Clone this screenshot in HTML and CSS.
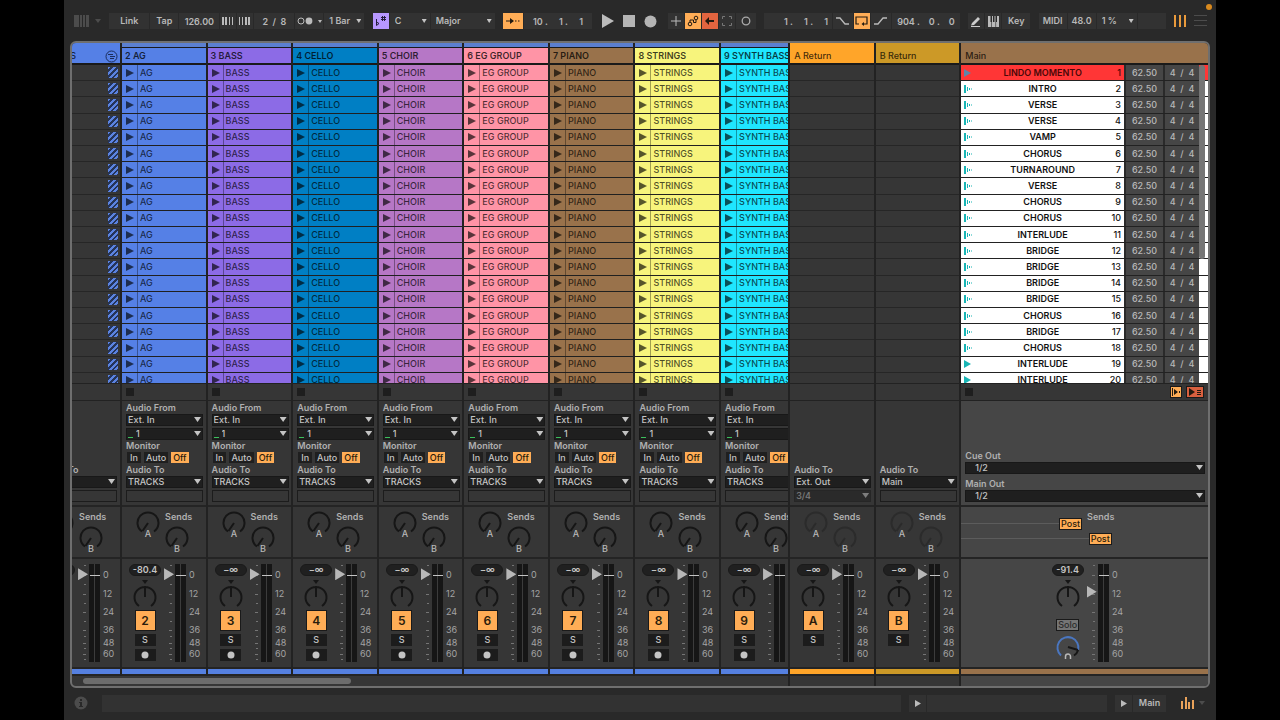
FILE: index.html
```html
<!DOCTYPE html>
<html lang="en">
<head>
    <meta charset="UTF-8">
    <meta name="viewport" content="width=device-width, initial-scale=1.0">
    <title>Session View</title>
    <link rel="stylesheet" href="styles.css">
</head>
<body>
    <div class="app">

        <!-- Control bar -->
        <header class="toolbar">
            <div class="group bare logo">
                <svg width="16" height="12" viewBox="0 0 16 12" fill="#4c4c4c"><path d="M0 0h5v12H0zM6 0h2v12H6zM9 0h2v12H9zM12 0h3v12h-3z"/></svg>
                <i class="tri dim"></i>
            </div>

            <div class="group">
                <button class="w40">Link</button>
                <button class="w28">Tap</button>
                <input class="w40" type="text" aria-label="Tempo" value="126.00">
                <button class="w16" aria-label="Nudge down"><svg width="12" height="10" viewBox="0 0 12 10" fill="#bbb"><path d="M0 1h2v8H0zM3 1h2v8H3zM7 1h1v8H7zM10 1h1v8h-1z"/></svg></button>
                <button class="w16" aria-label="Nudge up"><svg width="12" height="10" viewBox="0 0 12 10" fill="#bbb"><path d="M0 1h1v8H0zM3 1h1v8H3zM6 1h2v8H6zM9 1h2v8H9z"/></svg></button>
                <input class="w40" type="text" aria-label="Signature" value="2  /  8">
                <button class="w28" aria-label="Metronome"><svg width="25" height="10" viewBox="0 0 25 10"><circle cx="4" cy="5" r="3" fill="none" stroke="#bbb"/><circle cx="12" cy="5" r="3.4" fill="#bbb"/><path d="M21 4h4l-2 3z" fill="#bbb"/></svg></button>
                <span class="drop w40"><select aria-label="Quantization"><option>1 Bar</option></select></span>
            </div>

            <div class="group">
                <button class="w16 violet" aria-label="Scale"><svg width="12" height="12" viewBox="0 0 12 12" fill="none" stroke="#241c3c"><path d="M1.500 4v6.500l2.500-2-2.500-1.500M7.500 1v5M9.500 1v5M6 2.500h5M6 4.500h5"/></svg></button>
                <span class="drop w40"><select aria-label="Root note"><option>C</option></select></span>
                <span class="drop w64"><select aria-label="Scale name"><option>Major</option></select></span>
            </div>

            <div class="group">
                <button class="w20 amber" aria-label="Follow"><svg width="16" height="10" viewBox="0 0 16 10"><path d="M1 4.500h4V2l4 3-4 3V5.500H1zM10 4.500h1.500v1H10zM13 4.500h1.500v1H13z" fill="#221a10"/></svg></button>
                <input class="w68" type="text" aria-label="Position" value="10 .     1 .     1">
            </div>

            <div class="group bare transport">
                <button aria-label="Play"><svg width="12" height="14"><path d="M0 0l12 7-12 7z" fill="#bbb"/></svg></button>
                <button aria-label="Stop"><svg width="12" height="12"><path d="M0 0h12v12H0z" fill="#b4b4b4"/></svg></button>
                <button aria-label="Record"><svg width="13" height="13"><circle cx="6.500" cy="6.500" r="6" fill="#b4b4b4"/></svg></button>
            </div>

            <div class="group">
                <button class="w16" aria-label="Overdub"><svg width="10" height="10"><path d="M5 0v10M0 5h10" stroke="#bbb"/></svg></button>
                <button class="w16 amber" aria-label="Automation"><svg width="12" height="12" fill="none" stroke="#221a10"><circle cx="3" cy="9" r="1.800"/><circle cx="9" cy="3" r="1.800"/><path d="M3 7V5h3.500v2.500H9V5"/></svg></button>
                <button class="w16 red" aria-label="Re-enable automation"><svg width="10" height="8"><path d="M0 4l4-4v3h5v2H4v3z" fill="#221a10"/></svg></button>
                <button class="w16" aria-label="Capture"><svg width="10" height="10" fill="none" stroke="#777"><path d="M.5 3V.5H3M7 .5h2.500V3M9.500 7v2.500H7M3 9.500H.5V7"/></svg></button>
                <button class="w20" aria-label="Session record"><svg width="10" height="10"><circle cx="5" cy="5" r="3.800" fill="none" stroke="#aaa" stroke-width="1.300"/></svg></button>
            </div>

            <div class="group">
                <input class="w68 end" type="text" aria-label="Loop start" value="1 .     1 .     1">
                <button class="w20" aria-label="Punch in"><svg width="13" height="8" fill="none" stroke="#bbb" stroke-width="1.300"><path d="M0 1h4l5 6h4"/></svg></button>
                <button class="w16 amber" aria-label="Loop"><svg width="13" height="11" viewBox="0 0 13 11" fill="none" stroke="#221a10" stroke-width="1.200"><path d="M4 8H1V1h11v7h-3"/><path d="M9 6v4L6.500 8z" fill="#221a10" stroke="none"/></svg></button>
                <button class="w20" aria-label="Punch out"><svg width="13" height="8" fill="none" stroke="#bbb" stroke-width="1.300"><path d="M0 7h4l5-6h4"/></svg></button>
                <input class="w68" type="text" aria-label="Loop length" value="904 .    0 .    0">
            </div>

            <div class="group">
                <button class="w16" aria-label="Draw mode"><svg width="12" height="11" viewBox="0 0 12 11"><path d="M2 7l6-6 2 2-6 6-3 .500zM1 10h9v1H1z" fill="#ccc"/></svg></button>
                <button class="w16" aria-label="Computer keyboard"><svg width="11" height="11" viewBox="0 0 11 11"><path d="M0 0h11v11H0z" fill="#bbb"/><path d="M2.500 0h1.500v6H2.500zM5 0h1.500v6H5zM7.500 0H9v6H7.500zM3 6h.6v5H3zM7.500 6h.6v5h-.6z" fill="#2b2b2b"/></svg></button>
                <button class="w28">Key</button>
            </div>

            <div class="group">
                <button class="w28">MIDI</button>
                <button class="w28">48.0</button>
                <span class="drop w40"><select aria-label="CPU load"><option>1 %</option></select></span>
                <span class="blank"></span>
            </div>

            <div class="group bare views">
                <button aria-label="Session view"><svg width="14" height="12" fill="#e99a3c"><path d="M0 0h2v12H0zM5 0h2v12H5zM10 0h2v12h-2z"/></svg></button>
                <button aria-label="Arrangement view"><svg width="13" height="12" fill="#4c4c4c"><path d="M0 0h13v1H0zM0 5h13v1H0zM0 10h13v1H0z"/></svg></button>
            </div>
            <span class="dot"></span>
        </header>

        <!-- Session grid, columns are filled by script.js -->
        <main class="session"></main>

        <!-- Status bar -->
        <footer class="status">
            <svg class="info" width="14" height="14"><circle cx="7" cy="7" r="6.500" fill="#4c4c4c"/><path d="M6 3h2v2H6zM5 6h3v4h1v1H5v-1h1V7H5z" fill="#292929"/></svg>
            <div class="message"></div>
            <div class="preview">
                <button aria-label="Preview"><svg width="6" height="7"><path d="M0 0l6 3.500L0 7z" fill="#bbb"/></svg></button>
                <span></span>
            </div>
            <div class="output">
                <button aria-label="Play main"><svg width="6" height="7"><path d="M0 0l6 3.500L0 7z" fill="#bbb"/></svg></button>
                <button class="name">Main</button>
            </div>
            <svg class="levels" width="14" height="12" fill="#e9a25a"><path d="M0 4h2v8H0zM4 0h2v12H4zM7 5h2v7H7zM11 3h2v9h-2z"/></svg>
            <i class="tri dim"></i>
        </footer>
    </div>

    <script src="script.js"></script>
</body>
</html>
```

FILE: styles.css
```css
*{
    margin: 0;
    padding: 0;
    box-sizing: border-box;
}

body{
    background: #000;
    color: #b8b8b8;
    font-family: Inter, "Liberation Sans", sans-serif;
    font-size: 9px;
    font-weight: 500;
    line-height: 12px;
}

button, input, select{
    font: inherit;
    color: inherit;
    background: none;
    border: 0;
    border-radius: 0;
    appearance: none;
}

svg{
    display: block;
    flex: none;
}

.app{
    margin: 0 5%;
    background: #292929;
    min-height: 100vh;
}

/* control bar */
.toolbar{
    height: 41px;
    padding: 1px 9px 0 10px;
    display: flex;
    align-items: center;
    justify-content: space-between;
    position: relative;
    font-weight: 600;
}

.group{
    display: flex;
    gap: 1px;
    height: 16px;
}

.group > *{
    background: #323232;
    height: 16px;
    display: flex;
    align-items: center;
    justify-content: center;
    text-align: center;
}

.group.bare{
    align-items: center;
}

.group.bare > *{
    background-color: transparent;
}

.group.logo{
    gap: 5px;
}

.group.transport{
    gap: 9px;
    padding: 0 2px;
}

.group.views{
    gap: 6px;
}

.w16{ width: 16px; }
.w20{ width: 20px; }
.w28{ width: 28px; }
.w40{ width: 40px; }
.w64{ width: 64px; }
.w68{ width: 68px; }
.blank{ width: 28px; }
.group .end{ text-align: right; padding-right: 4px; }

.group .violet{ background: #b797ff; }
.group .amber{ background: #ffad56; }
.group .red{ background: #e2643f; }

.tri, .group .tri{
    width: 6px;
    height: 4px;
    background-color: #aaa;
    clip-path: polygon(0 0, 100% 0, 50% 100%);
}

.tri.dim, .group .tri.dim{
    background-color: #4c4c4c;
}

.drop{
    display: block;
    position: relative;
}

.drop select{
    display: block;
    width: 100%;
    height: 100%;
    padding-left: 5px;
}

.drop::after{
    content: "";
    position: absolute;
    right: 3px;
    top: 4px;
    width: 7px;
    height: 5px;
    background: #c4c4c4;
    clip-path: polygon(0 0, 100% 0, 50% 100%);
    pointer-events: none;
}

.toolbar .drop::after{
    top: 6px;
    width: 5px;
    height: 4px;
}

.dot{
    position: absolute;
    top: 4px;
    right: 4px;
    width: 6px;
    height: 6px;
    border-radius: 50%;
    background: #d98a1e;
}

/* session */
.session{
    margin: 0 6px;
    border: 2px solid #6f6f6f;
    border-radius: 6px;
    overflow: hidden;
    background: #363636;
    display: grid;
    grid-template-columns: minmax(0, 100fr) repeat(7, minmax(0, 171fr)) minmax(0, 138fr) repeat(2, minmax(0, 171fr)) minmax(0, 493fr);
}

.column{
    border-right: 2px solid #222;
    overflow: hidden;
}

.column.main{
    border-right: 0;
}

.column.main, .foot.main{
    background: #464646;
}

.title{
    height: 22px;
    border-bottom: 2px solid #1a1a1a;
    padding: 7px 4px 0;
    background: var(--color);
    color: rgba(0, 0, 0, .75);
    white-space: nowrap;
    overflow: hidden;
}

.track .title{
    border-top: 4px solid #5b7fd0;
    box-shadow: inset 0 1px #1a1a1a;
    padding: 3px 3px 0;
    font-weight: 600;
}

.group-track .title{
    display: flex;
    align-items: center;
    justify-content: space-between;
    padding: 6px 2px 0 0;
}

.group-track .title span{
    width: 4px;
    direction: rtl;
    overflow: hidden;
}

.clips{
    height: 318px;
    overflow: hidden;
    position: relative;
}

.rows{
    height: 324px;
    display: grid;
    grid-template-rows: repeat(20, 1fr);
}

.clip{
    border-bottom: 1px solid #202020;
    display: flex;
    align-items: center;
    overflow: hidden;
    white-space: nowrap;
    color: rgba(0, 0, 0, .7);
    background: var(--color);
}

.clip button{
    width: 16px;
    height: 100%;
    padding-left: 4px;
    border-right: 1px solid rgba(0, 0, 0, .35);
    margin-right: 2px;
    flex: none;
}

.slot{
    border-bottom: 1px solid #262626;
    display: flex;
    justify-content: flex-end;
    padding: 2px 2px 2px 0;
}

.slot i{
    width: 10px;
    background: repeating-linear-gradient(135deg, #5b83e0 0 2px, #253458 2px 4px);
}

.scene{
    display: grid;
    grid-template-columns: 1fr 39px 34px 9px;
    border-bottom: 1px solid #222;
}

.scene > *{
    display: flex;
    align-items: center;
    justify-content: center;
    background: #464646;
    border-right: 2px solid #2a2a2a;
    white-space: pre;
}

.scene .launch{
    display: grid;
    grid-template-columns: 18px 1fr 18px;
    padding: 0 3px;
    background: #fff;
    color: #111;
    font-weight: 600;
}

.scene .launch b{
    font-weight: 500;
    text-align: right;
}

.scene .edge{
    background: #fff;
    border: 0;
}

.scene .sig{
    border: 0;
}

.scene.playing .launch, .scene.playing .edge{
    background: #ff3636;
    color: #4a0808;
}

.scrollbar{
    position: absolute;
    top: 0;
    right: 3px;
    width: 6px;
    height: 194px;
    background: #757575;
    border-radius: 3px;
}

.stops{
    height: 18px;
    border-top: 1px solid #222;
    border-bottom: 1px solid #222;
    background: #363636;
    display: flex;
    align-items: center;
    gap: 4px;
    padding: 0 4px;
}

.stops .stop{
    width: 8px;
    height: 8px;
    background: #1e1e1e;
    margin-right: auto;
}

.stops .box{
    height: 12px;
    border: 1px solid #1a1a1a;
    background: #ffad56;
    padding: 1px;
}

.stops .box.red{
    background: #d9603f;
}

.group-track .stop{
    visibility: hidden;
}

/* routing */
.io, .sends, .mixer{
    display: flex;
    border-bottom: 2px solid #242424;
}

.strip{
    flex: 0 0 84px;
}

.group-track .io, .group-track .sends, .group-track .mixer{
    justify-content: flex-end;
}

.io{
    height: 106px;
}

.io .strip{
    display: flex;
    flex-direction: column;
    padding: 1px 3px 3px 4px;
}

.main .io .strip{
    flex: 1;
}

.io label, .io .caption, .sends .label{
    font-weight: 600;
    color: #b0b0b0;
}

.io .drop{
    height: 12px;
    background: #1f1f1f;
    border: 1px solid #181818;
    margin-bottom: 2px;
}

.io .drop select{
    padding-left: 1px;
    line-height: 10px;
    color: #c4c4c4;
}

.io .drop::after{
    top: 2px;
    right: 1px;
}

.io .drop.channel select{
    padding-left: 9px;
}

.io .drop.signal{
    background: linear-gradient(#3bbf5c, #3bbf5c) 1px 8px / 5px 1px no-repeat #1f1f1f;
    margin-bottom: 0;
}

.io .drop.off{
    opacity: .5;
    margin: 0;
}

.io .first, .io .after{
    margin-top: auto;
}

.io .empty{
    height: 12px;
    border: 1px solid #1c1c1c;
}

.main .io .drop{
    margin-bottom: 4px;
}

.main .io .drop:last-child{
    margin-bottom: 0;
}

.monitor{
    display: flex;
    gap: 3px;
    padding-left: 1px;
}

.monitor button{
    height: 11px;
    line-height: 11px;
    padding: 0 2px;
    background: #1f1f1f;
    color: #c4c4c4;
}

.monitor button:first-child{
    padding: 0 3px;
}

.monitor .on{
    background: #ffad56;
    color: #2a1c0c;
}

/* sends */
.sends{
    height: 52px;
}

.sends .strip{
    display: flex;
    padding: 4px 0 0 14px;
    gap: 5px;
}

.sends .label{
    display: block;
    line-height: 12px;
    height: 15px;
}

.knob text{
    fill: #b8b8b8;
    font-size: 9px;
    text-anchor: middle;
}

.faded .knob path{
    opacity: .35;
}

.main .sends{
    flex-direction: column;
    padding-top: 4px;
    position: relative;
}

.main .sends .label{
    position: absolute;
    left: 51%;
    top: 4px;
}

.post{
    display: flex;
    align-items: center;
    height: 15px;
    margin-top: 5px;
    width: 49%;
}

.post + .post{
    margin-top: 0;
    width: 61%;
}

.post::before{
    content: "";
    flex: 1;
    height: 1px;
    background: #5c5c5c;
}

.post button, .solo{
    background: #ffad56;
    color: #2a1c0c;
    border: 1px solid #1a1a1a;
    height: 12px;
    line-height: 10px;
    padding: 0 1px;
}

/* mixer */
.mixer{
    height: 110px;
}

.main .mixer{
    justify-content: center;
    padding-left: 4px;
}

.mixer .strip{
    display: flex;
    padding: 5px 0 0 7px;
    gap: 3px;
}

.controls{
    width: 32px;
    display: flex;
    flex-direction: column;
    align-items: center;
}

.volume{
    width: 32px;
    height: 12px;
    line-height: 10px;
    border-radius: 6px;
    background: #202020;
    border: 1px solid #1a1a1a;
    text-align: center;
    color: #c4c4c4;
    font-weight: 600;
}

.pan{
    margin: 4px 0 1px;
}

.activator{
    width: 21px;
    height: 21px;
    background: #ffad56;
    border: 1px solid #1a1a1a;
    color: #2a1c0c;
    font-size: 12px;
    font-weight: 600;
    margin-bottom: 3px;
}

.small{
    width: 21px;
    height: 12px;
    background: #1c1c1c;
    color: #c4c4c4;
    display: flex;
    align-items: center;
    justify-content: center;
    margin-bottom: 3px;
}

.solo{
    background: #757575;
    color: #2c2c2c;
    margin: 9px 0 4px;
}

.fader{
    position: relative;
    width: 40px;
    height: 98px;
}

.fader text{
    fill: #a4a4a4;
    font-size: 9px;
    font-weight: 400;
}

.fader input{
    position: absolute;
    left: 0;
    top: 0;
    width: 10px;
    height: 96px;
    writing-mode: vertical-lr;
    direction: rtl;
}

.fader input::-webkit-slider-thumb{
    appearance: none;
    width: 10px;
    height: 12px;
    background: #b8b8b8;
    clip-path: polygon(0 0, 100% 50%, 0 100%);
}

.stripe{
    height: 7px;
    background: var(--color);
    border-bottom: 2px solid #242424;
}

.foot{
    height: 10px;
    border-right: 2px solid #222;
}

.foot.main{
    border: 0;
}

.foot.scroll{
    grid-column: span 9;
    padding: 2px 0 0 11px;
}

.foot.scroll div{
    width: 38%;
    height: 6px;
    border-radius: 3px;
    background: #6c6c6c;
}

/* status bar */
.status{
    display: flex;
    align-items: center;
    padding: 0 11px 0 10px;
    height: 30px;
}

.message, .preview, .output{
    height: 17px;
    background: #323232;
}

.message{
    flex: 797;
    margin: 0 8px 0 14px;
}

.preview{
    flex: 197;
    display: flex;
    margin-right: 8px;
}

.status button{
    height: 17px;
    width: 18px;
    display: flex;
    align-items: center;
    justify-content: center;
    border-right: 1px solid #292929;
}

.output{
    display: flex;
}

.status .name{
    width: 34px;
    font-weight: 600;
}

.levels{
    margin: 0 4px 0 14px;
}
```

FILE: script.js
```javascript
let session = document.querySelector(".session")

let tracks = [
    { type: "group-track", name: "S", color: "#5580e6" },
    { type: "track", id: "2", name: "AG", color: "#5580e6", volume: "-80.4" },
    { type: "track", id: "3", name: "BASS", color: "#8c6be6" },
    { type: "track", id: "4", name: "CELLO", color: "#007fc4" },
    { type: "track", id: "5", name: "CHOIR", color: "#b677c6" },
    { type: "track", id: "6", name: "EG GROUP", color: "#ff94a6" },
    { type: "track", id: "7", name: "PIANO", color: "#99724b" },
    { type: "track", id: "8", name: "STRINGS", color: "#f7f47c" },
    { type: "track", id: "9", name: "SYNTH BASS", color: "#1fe6ff" },
    { type: "return faded", id: "A", name: "Return", color: "#ffa529", output: "Ext. Out", channel: "3/4" },
    { type: "return faded", id: "B", name: "Return", color: "#cc9927", output: "Main" },
    { type: "main", name: "Main", color: "#99724b" }
]

let scenes = ["LINDO MOMENTO", "INTRO", "VERSE", "VERSE", "VAMP", "CHORUS", "TURNAROUND", "VERSE", "CHORUS", "CHORUS",
    "INTERLUDE", "BRIDGE", "BRIDGE", "BRIDGE", "BRIDGE", "CHORUS", "BRIDGE", "CHORUS", "INTERLUDE", "INTERLUDE"]

let play = `<svg width="8" height="8"><path d="M0 0l8 4-8 4z" fill="#000" fill-opacity=".65"/></svg>`

let select = (label, value, cls = "") =>
    `<span class="drop ${cls}"><select aria-label="${label}"><option>${value}</option></select></span>`

// label with its select
let field = (t, label, value, cls = "", labelCls = "") => {
    let id = (label + "-" + (t.id ?? t.name)).replaceAll(" ", "-").toLowerCase()
    return `
        <label class="${labelCls}" for="${id}">${label}</label>
        <span class="drop ${cls}"><select id="${id}"><option>${value}</option></select></span>`
}

let knob = (letter) => `
    <svg class="knob" width="24" height="30">
        <path d="M6 20.500A10.500 10.500 0 1 1 18 20.500M12 12L6.500 20" fill="none" stroke="#161616" stroke-width="2"/>
        <text x="12" y="26">${letter}</text>
    </svg>`

let pan = `
    <svg class="pan" width="26" height="29">
        <path d="M10 0h6l-3 4z" fill="#161616"/>
        <path d="M7 26A10.500 10.500 0 1 1 19 26M13 6v11" fill="none" stroke="#161616" stroke-width="2"/>
    </svg>`

let cue = `
    <svg width="26" height="26" fill="none" stroke-width="2">
        <path d="M6 20.500A10.500 10.500 0 1 1 23.200 15" stroke="#4a76c0"/>
        <path d="M23.200 15A10.500 10.500 0 0 1 19 20.500M13 12l10 3" stroke="#161616"/>
        <path d="M10.500 24v-2.500a2.500 2.500 0 0 1 5 0V24" stroke="#b8b8b8" stroke-width="1.500"/>
    </svg>`

let fader = (value) => {
    let scale = [[0, 11], [12, 30], [24, 48], [36, 66], [48, 79], [60, 90]]
    let ticks = [1, 11, 20, 30, 39, 48, 57, 66, 72, 79, 84, 90, 95]
    return `
    <div class="fader">
        <svg width="40" height="98">
            ${ticks.map(y => `<path d="M${scale.some(s => s[1] == y) ? 5 : 6} ${y}.500H8" stroke="#757575"/>`).join("")}
            <path d="M11 0h11v98H11z" fill="#161616"/>
            <path d="M16.500 0v98" stroke="#3c3c3c"/>
            <path d="M12 11.500h10" stroke="#c4c4c4"/>
            ${scale.map(s => `<text x="25" y="${s[1] + 3}">${s[0]}</text>`).join("")}
        </svg>
        <input type="range" aria-label="Volume" value="${value}">
    </div>`
}

let clips = (t) => {
    if (t.type == "main") {
        return scenes.map((name, i) => {
            let bars = i > 0 && i < 18
            let icon = bars
                ? `<path d="M0 0h2v8H0zM3 2h1v4H3zM5 3h1v2H5zM7 3.500h1v1H7z" fill="#19b5b5"/>`
                : `<path d="M0 0l7 4-7 4z" fill="${i ? "#19b5b5" : "#5d86a8"}"/>`
            return `
            <div class="scene ${i == 0 ? "playing" : ""}">
                <button class="launch"><svg width="8" height="8">${icon}</svg><span>${name}</span><b>${i + 1}</b></button>
                <span>62.50</span>
                <span class="sig">4  /  4</span>
                <span class="edge"></span>
            </div>`
        }).join("")
    }
    if (t.type == "track") {
        return `<div class="clip"><button aria-label="Launch ${t.name}">${play}</button>${t.name}</div>`.repeat(20)
    }
    return `<div class="slot">${t.type == "group-track" ? "<i></i>" : ""}</div>`.repeat(20)
}

let routing = (t) => {
    if (t.type == "main") {
        return field(t, "Cue Out", "1/2", "channel", "first") + field(t, "Main Out", "1/2", "channel")
    }
    let input = t.type != "track" ? "" : `
        ${field(t, "Audio From", "Ext. In")}
        ${select("Input channel", "1", "channel signal")}
        <span class="caption">Monitor</span>
        <div class="monitor"><button>In</button><button>Auto</button><button class="on">Off</button></div>`
    return `
        ${input}
        ${field(t, "Audio To", t.output ?? (t.type == "track" ? "TRACKS" : ""), "", "after")}
        ${t.channel ? select("Output channel", t.channel, "off") : `<div class="empty"></div>`}`
}

let sends = (t) => {
    if (t.type == "main") {
        return `<span class="label">Sends</span>
            <div class="post"><button>Post</button></div>
            <div class="post"><button>Post</button></div>`
    }
    return `<div class="strip">${knob("A")}<div><span class="label">Sends</span>${knob("B")}</div></div>`
}

let controls = (t) => {
    if (t.type == "main") {
        return `<div class="volume">-91.4</div>${pan}<button class="solo">Solo</button>${cue}`
    }
    // the group strip is scrolled out, only its right part shows
    if (t.type == "group-track") {
        return `<div class="volume"></div>`
    }
    return `
        <div class="volume">${t.volume ?? "−∞"}</div>
        ${pan}
        <button class="activator">${t.id}</button>
        <button class="small">S</button>
        ${t.type == "track" ? `<button class="small" aria-label="Arm"><svg width="8" height="8"><circle cx="4" cy="4" r="3.500" fill="#c4c4c4"/></svg></button>` : ""}`
}

let title = (t) => {
    if (t.type == "group-track") {
        return `<span>${t.name}</span>
            <svg width="13" height="13" fill="none" stroke="#1b2d5c"><circle cx="6.500" cy="6.500" r="5.500"/><path d="M3 4.500h5M5 6.500h5M5 8.500h4"/></svg>`
    }
    return t.id ? t.id + " " + t.name : t.name
}

let sceneTools = `
    <button class="box" aria-label="Follow actions"><svg width="8" height="8"><path d="M0 0h1v8H0zM2 1l4 3-4 3zM7 3h1v2H7z" fill="#221a10"/></svg></button>
    <button class="box red" aria-label="Back to arrangement"><svg width="14" height="8"><path d="M1 0l6 4-6 4zM9 2h4v1H9zM9 4h4v1H9zM9 6h4v1H9z" fill="#221a10"/></svg></button>`

let displayTracks = () => {
    let finalData = ''
    tracks.forEach(t => {
        let stripe = t.type.includes("track") ? "#5580e0" : t.color
        finalData += `
        <section class="column ${t.type}" style="--color: ${t.color}">
            <div class="title">${title(t)}</div>
            <div class="clips">
                <div class="rows">${clips(t)}</div>
                ${t.type == "main" ? `<div class="scrollbar"></div>` : ""}
            </div>
            <div class="stops">
                ${t.type.includes("return") ? "" : `<button class="stop" aria-label="Stop"></button>`}
                ${t.type == "main" ? sceneTools : ""}
            </div>
            <div class="io"><div class="strip">${routing(t)}</div></div>
            <div class="sends">${sends(t)}</div>
            <div class="mixer"><div class="strip"><div class="controls">${controls(t)}</div>${fader(t.type == "main" ? 74 : 95)}</div></div>
            <div class="stripe" style="--color: ${stripe}"></div>
        </section>`
    })

    finalData += `
        <div class="foot scroll"><div></div></div>
        <div class="foot"></div>
        <div class="foot"></div>
        <div class="foot main"></div>`
    session.innerHTML = finalData
}

displayTracks()
```
